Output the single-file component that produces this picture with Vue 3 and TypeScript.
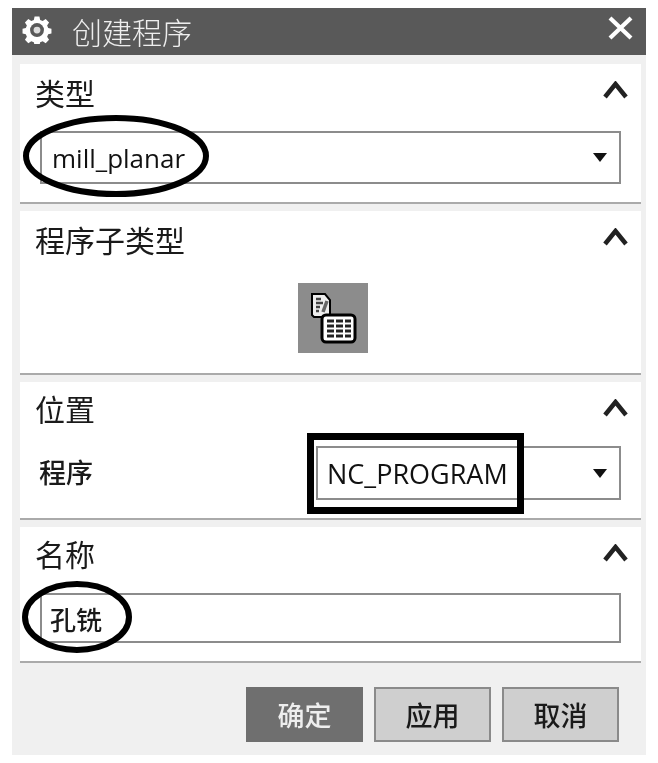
<template>
  <div class="dialog">
    <div class="title-bar">
      <svg class="gear" viewBox="0 0 28 28">
        <path d="M11.500 1h5l.8 3.600 2.600 1.100 3.100-2 3.500 3.500-2 3.100 1.100 2.600 3.400.8v5l-3.400.8-1.100 2.600 2 3.100-3.500 3.500-3.100-2-2.600 1.100-.8 3.200h-5l-.8-3.200-2.600-1.100-3.100 2-3.500-3.500 2-3.100-1.100-2.600-3.400-.8v-5l3.400-.8 1.100-2.600-2-3.100 3.500-3.500 3.100 2 2.600-1.100z" transform="translate(1.400 1.400) scale(.9)" fill="#fff" />
        <circle cx="14" cy="15" r="6.500" fill="#595959" />
        <circle cx="14" cy="15" r="3.200" fill="#ddd" />
      </svg>
      <span class="title-text">创建程序</span>
      <svg class="close" viewBox="0 0 25 24">
        <path d="M2 2l21 20M23 2L2 22" stroke="#fff" stroke-width="4.200" fill="none" />
      </svg>
    </div>

    <section class="panel panel-type">
      <div class="panel-head">
        <span>类型</span>
        <svg class="chevron" viewBox="0 0 25 18"><path d="M2 16L12.500 3 23 16" stroke="#222" stroke-width="4.500" fill="none" /></svg>
      </div>
      <div class="combo">
        <span class="latin">mill_planar</span>
        <i class="arrow"></i>
      </div>
      <svg class="ring ring-type" viewBox="0 0 188 84">
        <ellipse cx="94" cy="42" rx="90" ry="38" fill="none" stroke="#000" stroke-width="6" />
      </svg>
    </section>

    <section class="panel panel-sub">
      <div class="panel-head">
        <span>程序子类型</span>
        <svg class="chevron" viewBox="0 0 25 18"><path d="M2 16L12.500 3 23 16" stroke="#222" stroke-width="4.500" fill="none" /></svg>
      </div>
      <div class="tile">
        <svg viewBox="0 0 70 70" width="70" height="70">
          <path d="M14 11h13l5 6v20H24v-3h-8l-2-2z" fill="#eee" stroke="#000" stroke-width="2" />
          <path d="M18 16h5M18 20h7M18 24h4M18 28h3" stroke="#444" stroke-width="2.500" />
          <path d="M29 18l-4 11" stroke="#666" stroke-width="3.500" />
          <rect x="24" y="32" width="33" height="27" rx="4" fill="#fff" stroke="#000" stroke-width="3" />
          <path d="M29 38h7M38 38h7M47 38h6M29 43h7M38 43h7M47 43h6M29 48h7M38 48h7M47 48h6M29 53h7M38 53h7M47 53h6" stroke="#222" stroke-width="3" />
        </svg>
      </div>
    </section>

    <section class="panel panel-loc">
      <div class="panel-head">
        <span class="head-raised">位置</span>
        <svg class="chevron" viewBox="0 0 25 18"><path d="M2 16L12.500 3 23 16" stroke="#222" stroke-width="4.500" fill="none" /></svg>
      </div>
      <div class="loc-row">
        <span class="loc-label">程序</span>
        <div class="combo combo-loc">
          <span class="latin latin-loc">NC_PROGRAM</span>
          <i class="arrow"></i>
        </div>
      </div>
      <div class="box-mark"></div>
    </section>

    <section class="panel panel-name">
      <div class="panel-head">
        <span class="head-raised">名称</span>
        <svg class="chevron" viewBox="0 0 25 18"><path d="M2 16L12.500 3 23 16" stroke="#222" stroke-width="4.500" fill="none" /></svg>
      </div>
      <div class="combo combo-name">
        <span class="name-value">孔铣</span>
      </div>
      <svg class="ring ring-name" viewBox="0 0 110 74">
        <ellipse cx="55" cy="37" rx="52" ry="33" fill="none" stroke="#000" stroke-width="6" />
      </svg>
    </section>

    <div class="actions">
      <button class="btn btn-primary">确定</button>
      <button class="btn">应用</button>
      <button class="btn">取消</button>
    </div>
  </div>
</template>

<script setup lang="ts">
</script>

<style>
html, body {
  background: #fff;
}
</style>

<style scoped>
.dialog {
  position: relative;
  box-sizing: border-box;
  width: 634px;
  height: 747px;
  margin: 8px 0 0 12px;
  background: #f0f0f0;
  color: #1a1a1a;
  font-family: "Noto Sans CJK SC", "Liberation Sans", sans-serif;
  filter: blur(0.5px);
}

.title-bar {
  display: flex;
  align-items: center;
  height: 47px;
  padding: 0 13px 0 10px;
  box-sizing: border-box;
  background: #595959;
  color: #eee;
}

.gear {
  width: 30px;
  height: 30px;
  margin-bottom: 6px;
}

.title-text {
  margin-left: 20px;
  font-size: 30px;
  font-weight: 300;
  line-height: 47px;
}

.close {
  width: 25px;
  height: 24px;
  margin-left: auto;
  margin-bottom: 7px;
}

.panel {
  position: relative;
  box-sizing: border-box;
  margin: 0 5px 7px 8px;
  background: #fff;
  border-bottom: 2px solid #aaa;
}

.panel-type {
  height: 140px;
  margin-top: 9px;
}

.panel-sub {
  height: 164px;
}

.panel-loc {
  height: 138px;
}

.panel-name {
  height: 136px;
}

.panel-head {
  display: flex;
  align-items: center;
  justify-content: space-between;
  height: 56px;
  padding: 0 13px 0 15px;
  font-size: 30px;
  font-weight: 400;
}

.head-raised {
  margin-bottom: 5px;
}

.chevron {
  width: 25px;
  height: 18px;
  margin-bottom: 4px;
}

.combo {
  display: flex;
  align-items: center;
  justify-content: space-between;
  box-sizing: border-box;
  width: 581px;
  height: 53px;
  margin: 11px 0 0 20px;
  padding: 0 12px 0 10px;
  background: #fff;
  border: 2px solid #8c8c8c;
}

.latin {
  font-family: "Open Sans", "Liberation Sans", sans-serif;
  font-size: 26px;
  color: #111;
}

.latin-loc {
  margin-left: -1px;
  font-size: 27px;
}

.arrow {
  width: 0;
  height: 0;
  border-left: 7.500px solid transparent;
  border-right: 7.500px solid transparent;
  border-top: 9px solid #111;
}

.ring {
  position: absolute;
  pointer-events: none;
}

.ring-type {
  left: 2px;
  top: 50px;
  width: 188px;
  height: 84px;
}

.ring-name {
  left: 2px;
  top: 53px;
  width: 110px;
  height: 74px;
}

.tile {
  width: 70px;
  height: 70px;
  margin: 16px 0 0 278px;
  background: #8c8c8c;
}

.loc-row {
  display: flex;
  align-items: center;
  justify-content: space-between;
  height: 54px;
  margin-top: 8px;
  padding: 0 20px 0 19px;
}

.loc-label {
  margin-bottom: 3px;
  font-size: 27px;
  font-weight: 500;
}

.combo-loc {
  width: 305px;
  height: 54px;
  margin: 0;
}

.box-mark {
  position: absolute;
  left: 287px;
  top: 51px;
  box-sizing: border-box;
  width: 217px;
  height: 81px;
  border: 7px solid #000;
}

.combo-name {
  height: 50px;
  margin-top: 10px;
  padding-left: 8px;
}

.name-value {
  font-size: 26px;
  font-weight: 500;
}

.actions {
  display: flex;
  justify-content: flex-end;
  gap: 11px;
  padding: 24px 27px 0 0;
  margin-top: -7px;
}

.actions .btn {
  width: 117px;
  height: 55px;
  padding: 0;
  background: #cfcfcf;
  border: 2px solid #8a8a8a;
  color: #1a1a1a;
  font-family: inherit;
  font-size: 27px;
  font-weight: 500;
}

.actions .btn-primary {
  background: #6f6f6f;
  border-color: #6f6f6f;
  color: #eee;
}
</style>
